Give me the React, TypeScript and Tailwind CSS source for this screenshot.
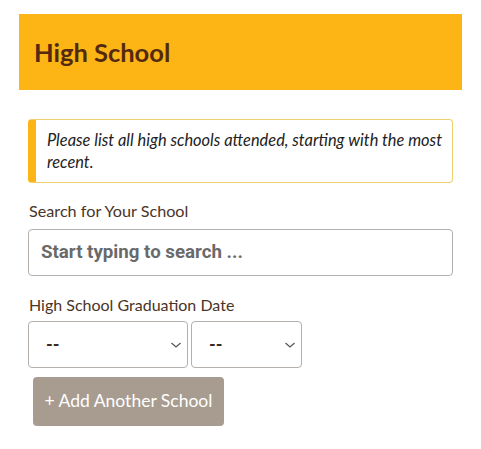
export default function App() {
  return (
    <div className="min-h-[449px] w-[481px] bg-white pt-[14px] pl-[19px] font-['Lato','Open_Sans',sans-serif] text-[#4a3426]">
      <div className="flex h-[76px] w-[443px] items-center bg-[#fdb515] pl-[15px]">
        <h2 className="text-[25.5px] font-bold text-[#53290f]">High School</h2>
      </div>
      <div className="mt-[29px] ml-[9px] w-[425px]">
        <div className="rounded-[4px] border border-[#ecd06a] border-l-[8px] border-l-[#fdb515] py-[9px] pl-[11px] pr-0 text-[16.4px] italic leading-[22px] text-[#222]">
          Please list all high schools attended, starting with the most recent.
        </div>
        <label className="mt-[17px] block pl-[1px] text-[16.2px] leading-[22px]">Search for Your School</label>
        <div className="mt-[7px] flex h-[47px] items-center rounded-[4px] border border-[#b5b0ab] pl-[12px]">
          <span className="font-['Roboto',sans-serif] text-[18.7px] font-bold text-[#6a6a6a]">Start typing to search ...</span>
        </div>
        <label className="mt-[18px] block pl-[1px] text-[16px] leading-[22px]">High School Graduation Date</label>
        <div className="mt-[5px] flex gap-[3px]">
          <div className="flex h-[47px] w-[160px] items-center justify-between rounded-[4px] border border-[#b5b0ab] pl-[17px] pr-[4px]">
            <span className="text-[18px] font-bold text-[#3a2a20]">--</span>
            <svg width="12" height="8" viewBox="0 0 12 8" fill="none" className="mr-[1px]">
              <path d="M1.5 2l4.5 4 4.5-4" stroke="#555" strokeWidth="1.2" />
            </svg>
          </div>
          <div className="flex h-[47px] w-[111px] items-center justify-between rounded-[4px] border border-[#b5b0ab] pl-[17px] pr-[4px]">
            <span className="text-[18px] font-bold text-[#3a2a20]">--</span>
            <svg width="12" height="8" viewBox="0 0 12 8" fill="none" className="mr-[1px]">
              <path d="M1.5 2l4.5 4 4.5-4" stroke="#555" strokeWidth="1.2" />
            </svg>
          </div>
        </div>
        <button className="mt-[9px] ml-[5px] flex h-[49px] w-[191px] items-center justify-center rounded-[4px] bg-[#a89c91] text-[17.5px] text-white">
          + Add Another School
        </button>
      </div>
    </div>
  )
}
